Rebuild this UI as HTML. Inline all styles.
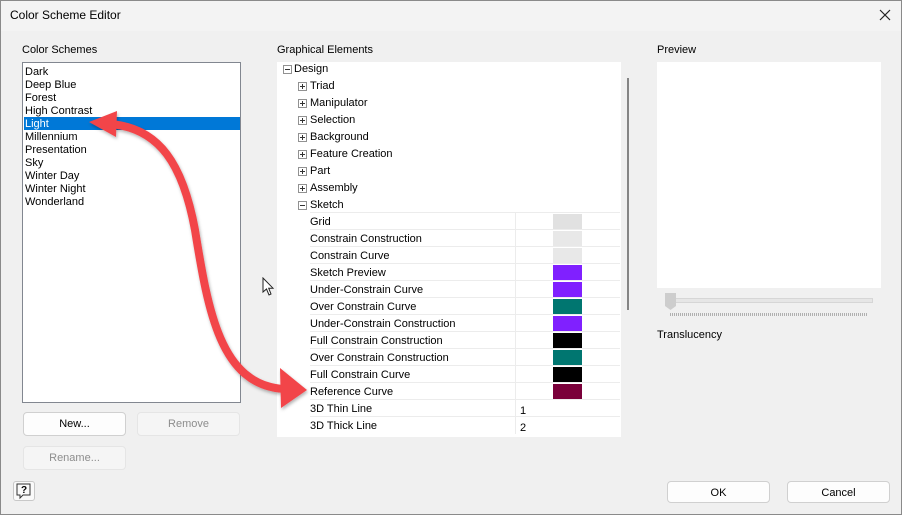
<!DOCTYPE html>
<html><head><style>
*{margin:0;padding:0;box-sizing:border-box}
body{width:902px;height:515px;overflow:hidden;background:#f0f0f0;font-family:"Liberation Sans",sans-serif;font-size:11px;color:#000;position:relative}
.a{position:absolute}
.win{left:0;top:0;width:902px;height:515px;border:1px solid #8a8a8a;background:#f0f0f0}
.title{left:1px;top:1px;width:900px;height:30px;background:#f3f3f3}
.lbl{font-size:11px;color:#000}
.box{background:#fff;border:1px solid #828790}
.li{position:absolute;left:2px;height:13px;line-height:15px;font-size:11px;white-space:nowrap}
.btn{border:1px solid #d0d0d0;border-radius:4px;background:#fdfdfd;text-align:center;line-height:23px;font-size:11px}
.dis{background:#f5f5f5;color:#8d8d8d;border-color:#e5e5e5}
.tr{position:absolute;height:17px;line-height:18px;font-size:11px;white-space:nowrap}
.pm{position:absolute;width:9px;height:9px;border:1px solid #919191;background:#fff;top:5px}
.pm:before{content:"";position:absolute;left:1px;top:3px;width:5px;height:1px;background:#333}
.plus:after{content:"";position:absolute;left:3px;top:1px;width:1px;height:5px;background:#333}
.row{position:absolute;left:310px;width:310px;height:17px;border-bottom:1px solid #ececec;font-size:11px;line-height:18px}
.row .d{position:absolute;left:205px;top:0;width:1px;height:17px;background:#ececec}
.row .s{position:absolute;left:243px;top:1px;width:29px;height:15px}
.row .v{position:absolute;left:210px;top:2px}
</style></head><body>
<div class="a win"></div>
<div class="a title"></div>
<div class="a" style="left:10px;top:8px;font-size:12px">Color Scheme Editor</div>
<svg class="a" style="left:879px;top:9px" width="12" height="12"><path d="M1 1L11 11M11 1L1 11" stroke="#222" stroke-width="1.2"/></svg>

<div class="a lbl" style="left:22px;top:44px">Color Schemes</div>
<div class="a box" style="left:22px;top:62px;width:219px;height:341px">
<div class="li" style="top:2px">Dark</div>
<div class="li" style="top:15px">Deep Blue</div>
<div class="li" style="top:28px">Forest</div>
<div class="li" style="top:41px">High Contrast</div>
<div class="li" style="top:54px;left:1px;width:216px;background:#0078d7;color:#fff;padding-left:1px">Light</div>
<div class="li" style="top:67px">Millennium</div>
<div class="li" style="top:80px">Presentation</div>
<div class="li" style="top:93px">Sky</div>
<div class="li" style="top:106px">Winter Day</div>
<div class="li" style="top:119px">Winter Night</div>
<div class="li" style="top:132px">Wonderland</div>
</div>
<div class="a btn" style="left:23px;top:412px;width:103px;height:24px">New...</div>
<div class="a btn dis" style="left:137px;top:412px;width:103px;height:24px">Remove</div>
<div class="a btn dis" style="left:23px;top:446px;width:103px;height:24px">Rename...</div>
<div class="a" style="left:13px;top:481px;width:22px;height:20px;border:1px solid #c8c8c8;border-radius:3px;background:#fafafa"></div>
<svg class="a" style="left:15px;top:482px" width="18" height="18"><path d="M2 2H15V13H8L5 16V13H2Z" fill="none" stroke="#333"/><text x="6" y="11" font-size="10" font-family="Liberation Sans" font-weight="bold">?</text></svg>

<div class="a lbl" style="left:277px;top:44px">Graphical Elements</div>
<div class="a" style="left:277px;top:62px;width:344px;height:375px;background:#fff"></div>
<div class="tr" style="left:283px;top:60px"><span class="pm" style="left:0"></span><span style="margin-left:11px">Design</span></div>
<div class="tr" style="left:298px;top:77px"><span class="pm plus"></span><span style="margin-left:12px">Triad</span></div>
<div class="tr" style="left:298px;top:94px"><span class="pm plus"></span><span style="margin-left:12px">Manipulator</span></div>
<div class="tr" style="left:298px;top:111px"><span class="pm plus"></span><span style="margin-left:12px">Selection</span></div>
<div class="tr" style="left:298px;top:128px"><span class="pm plus"></span><span style="margin-left:12px">Background</span></div>
<div class="tr" style="left:298px;top:145px"><span class="pm plus"></span><span style="margin-left:12px">Feature Creation</span></div>
<div class="tr" style="left:298px;top:162px"><span class="pm plus"></span><span style="margin-left:12px">Part</span></div>
<div class="tr" style="left:298px;top:179px"><span class="pm plus"></span><span style="margin-left:12px">Assembly</span></div>
<div class="tr" style="left:298px;top:196px"><span class="pm"></span><span style="margin-left:12px">Sketch</span></div>
<div class="a" style="left:310px;top:212px;width:310px;height:1px;background:#ececec"></div>
<div class="row" style="top:213px">Grid<i class="d"></i><i class="s" style="background:#e1e1e1"></i></div>
<div class="row" style="top:230px">Constrain Construction<i class="d"></i><i class="s" style="background:#e8e8e8"></i></div>
<div class="row" style="top:247px">Constrain Curve<i class="d"></i><i class="s" style="background:#e8e8e8"></i></div>
<div class="row" style="top:264px">Sketch Preview<i class="d"></i><i class="s" style="background:#8020ff"></i></div>
<div class="row" style="top:281px">Under-Constrain Curve<i class="d"></i><i class="s" style="background:#8020ff"></i></div>
<div class="row" style="top:298px">Over Constrain Curve<i class="d"></i><i class="s" style="background:#007670"></i></div>
<div class="row" style="top:315px">Under-Constrain Construction<i class="d"></i><i class="s" style="background:#8020ff"></i></div>
<div class="row" style="top:332px">Full Constrain Construction<i class="d"></i><i class="s" style="background:#000"></i></div>
<div class="row" style="top:349px">Over Constrain Construction<i class="d"></i><i class="s" style="background:#007670"></i></div>
<div class="row" style="top:366px">Full Constrain Curve<i class="d"></i><i class="s" style="background:#000"></i></div>
<div class="row" style="top:383px">Reference Curve<i class="d"></i><i class="s" style="background:#7a003a"></i></div>
<div class="row" style="top:400px">3D Thin Line<i class="d"></i><span class="v">1</span></div>
<div class="row" style="top:417px;border:none">3D Thick Line<i class="d"></i><span class="v">2</span></div>
<div class="a" style="left:627px;top:78px;width:2px;height:232px;background:#858585"></div>

<div class="a lbl" style="left:657px;top:44px">Preview</div>
<div class="a" style="left:657px;top:62px;width:224px;height:226px;background:#fff"></div>
<div class="a" style="left:673px;top:298px;width:200px;height:5px;background:#e6e6e6;border:1px solid #d6d6d6"></div>
<svg class="a" style="left:665px;top:293px" width="12" height="18"><path d="M0 0H11V13L5.5 17L0 13Z" fill="#cdcdcd"/></svg>
<div class="a" style="left:670px;top:313px;width:198px;height:3px;background:repeating-linear-gradient(90deg,#b0b0b0 0 1px,transparent 1px 2px)"></div>
<div class="a lbl" style="left:657px;top:329px">Translucency</div>

<svg class="a" style="left:262px;top:277px" width="14" height="20"><path d="M1 1V15L4.5 12L7 18L9 17L6.7 11.2H11Z" fill="#fff" stroke="#222"/></svg>

<div class="a btn" style="left:667px;top:481px;width:103px;height:22px;line-height:22px">OK</div>
<div class="a btn" style="left:787px;top:481px;width:103px;height:22px;line-height:22px">Cancel</div>

<svg class="a" style="left:0;top:0" width="902" height="515">
<defs><filter id="sh"><feDropShadow dx="1" dy="2" stdDeviation="1.5" flood-opacity="0.3"/></filter></defs>
<g filter="url(#sh)" fill="#f2444a">
<path d="M110 124C160 128 183 165 195 230C208 310 220 385 284 389" fill="none" stroke="#f2444a" stroke-width="8"/>
<path d="M89 122L117 111L116 137Z"/>
<path d="M307 390L280 368L281 408Z"/>
</g>
</svg>
</body></html>
